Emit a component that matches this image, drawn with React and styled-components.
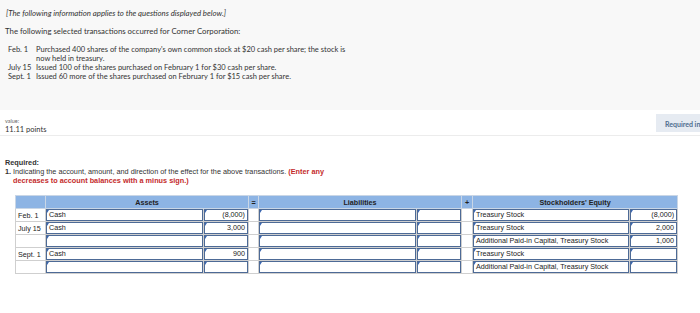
import React from "react";
import styled, { createGlobalStyle } from "styled-components";

const Global = createGlobalStyle`
  html, body { margin: 0; padding: 0; background: #fff; }
  body { width: 700px; height: 313px; overflow: hidden; }
`;

const Page = styled.div`
  width: 700px;
  font-family: Lato, "Open Sans", sans-serif;
  color: #333;
`;

const InfoPanel = styled.section`
  background: #f8f8f8;
  padding: 9px 0 0 6px;
  height: 101px;
  font-size: 7.5px;
`;

const Italic = styled.p`
  margin: 0;
  font-style: italic;
  line-height: 9px;
  font-size: 7.8px;
`;

const Intro = styled.p`
  margin: 9px 0 0 -1px;
  line-height: 9px;
  font-size: 7.8px;
`;

const TxList = styled.div`
  margin-top: 9px;
  display: grid;
  grid-template-columns: 30px 1fr;
  line-height: 9px;
`;

const TxDate = styled.span`
  padding-left: 2px;
  white-space: nowrap;
`;

const TxText = styled.span`
  max-width: 318px;
`;

const ValueBar = styled.div`
  display: flex;
  justify-content: space-between;
  align-items: flex-start;
  border-bottom: 1px solid #ececec;
  padding: 8px 0 3px 5px;
  height: 14px;
`;

const ValueInfo = styled.div`
  display: flex;
  flex-direction: column;
`;

const ValueLabel = styled.span`
  font-size: 5.5px;
  color: #666;
  line-height: 7px;
`;

const Points = styled.span`
  font-size: 7.5px;
  color: #333;
  line-height: 9px;
`;

const RequiredButton = styled.div`
  flex: none;
  width: 35px;
  margin-top: -4px;
  background: #e6ebf2;
  color: #4f6d8f;
  font-size: 7px;
  font-weight: 700;
  padding: 6px 0 4px 9px;
  white-space: nowrap;
  overflow: hidden;
  line-height: 8px;
`;

const Required = styled.div`
  font-family: "Liberation Sans", Arial, sans-serif;
  font-size: 7.3px;
  line-height: 9px;
  padding: 22px 0 0 5px;
  color: #333;
`;

const ReqTitle = styled.div`
  font-weight: 700;
`;

const ReqItem = styled.div`
  display: flex;
`;

const ReqNum = styled.span`
  font-weight: 700;
  width: 8px;
  flex: none;
`;

const ReqText = styled.p`
  margin: 0;
  width: 330px;
`;

const Red = styled.strong`
  color: #c42b2b;
  font-weight: 700;
`;

const TableWrap = styled.div`
  padding: 10px 0 0 15px;
`;

const Table = styled.table`
  border-collapse: collapse;
  table-layout: fixed;
  width: 662px;
  font-family: "Liberation Sans", Arial, sans-serif;
  font-size: 7.2px;
  color: #222;
`;

const HeadCell = styled.th`
  background: #8db4e4;
  border: 1px solid #c9d6e6;
  height: 12px;
  padding: 0;
  font-weight: 700;
  font-size: 7.2px;
  color: #222;
  text-align: center;
`;

const Cell = styled.td`
  border: 1px solid #cfcfcf;
  height: 11px;
  padding: 0;
  ${(p) => p.$date && "padding-left: 2px; white-space: nowrap;"}
`;

const InputCell = styled.td`
  border: 1px solid #cfcfcf;
  height: 11px;
  padding: 0;
`;

const Field = styled.div`
  position: relative;
  height: 10px;
  border: 1px solid #4d6a96;
  background: #fff;
  padding: 0 2px;
  line-height: 10px;
  text-align: ${(p) => (p.$num ? "right" : "left")};
  white-space: nowrap;
  overflow: hidden;
  &::before {
    content: "";
    position: absolute;
    left: 0;
    top: 0;
    border-top: 3px solid #3a66b0;
    border-right: 2px solid transparent;
  }
`;

const rows = [
  { date: "Feb. 1", a: "Cash", av: "(8,000)", e: "Treasury Stock", ev: "(8,000)" },
  { date: "July 15", a: "Cash", av: "3,000", e: "Treasury Stock", ev: "2,000" },
  { date: "", a: "", av: "", e: "Additional Paid-in Capital, Treasury Stock", ev: "1,000" },
  { date: "Sept. 1", a: "Cash", av: "900", e: "Treasury Stock", ev: "" },
  { date: "", a: "", av: "", e: "Additional Paid-in Capital, Treasury Stock", ev: "" },
];

export default function App() {
  return (
    <Page>
      <Global />
      <InfoPanel>
        <Italic>[The following information applies to the questions displayed below.]</Italic>
        <Intro>The following selected transactions occurred for Corner Corporation:</Intro>
        <TxList>
          <TxDate>Feb. 1</TxDate>
          <TxText>
            Purchased 400 shares of the company's own common stock at $20 cash per share; the stock is now held in treasury.
          </TxText>
          <TxDate>July 15</TxDate>
          <TxText>Issued 100 of the shares purchased on February 1 for $30 cash per share.</TxText>
          <TxDate>Sept. 1</TxDate>
          <TxText>Issued 60 more of the shares purchased on February 1 for $15 cash per share.</TxText>
        </TxList>
      </InfoPanel>
      <ValueBar>
        <ValueInfo>
          <ValueLabel>value:</ValueLabel>
          <Points>11.11 points</Points>
        </ValueInfo>
        <RequiredButton>Required information</RequiredButton>
      </ValueBar>
      <Required>
        <ReqTitle>Required:</ReqTitle>
        <ReqItem>
          <ReqNum>1.</ReqNum>
          <ReqText>
            Indicating the account, amount, and direction of the effect for the above transactions.{" "}
            <Red>(Enter any decreases to account balances with a minus sign.)</Red>
          </ReqText>
        </ReqItem>
      </Required>
      <TableWrap>
        <Table>
          <colgroup>
            <col style={{ width: 30 }} />
            <col style={{ width: 158 }} />
            <col style={{ width: 45 }} />
            <col style={{ width: 10 }} />
            <col style={{ width: 158 }} />
            <col style={{ width: 45 }} />
            <col style={{ width: 11 }} />
            <col style={{ width: 157 }} />
            <col style={{ width: 48 }} />
          </colgroup>
          <thead>
            <tr>
              <HeadCell />
              <HeadCell colSpan={2}>Assets</HeadCell>
              <HeadCell>=</HeadCell>
              <HeadCell colSpan={2}>Liabilities</HeadCell>
              <HeadCell>+</HeadCell>
              <HeadCell colSpan={2}>Stockholders' Equity</HeadCell>
            </tr>
          </thead>
          <tbody>
            {rows.map((r, i) => (
              <tr key={i}>
                <Cell $date>{r.date}</Cell>
                <InputCell><Field>{r.a}</Field></InputCell>
                <InputCell><Field $num>{r.av}</Field></InputCell>
                <Cell />
                <InputCell><Field /></InputCell>
                <InputCell><Field $num /></InputCell>
                <Cell />
                <InputCell><Field>{r.e}</Field></InputCell>
                <InputCell><Field $num>{r.ev}</Field></InputCell>
              </tr>
            ))}
          </tbody>
        </Table>
      </TableWrap>
    </Page>
  );
}
